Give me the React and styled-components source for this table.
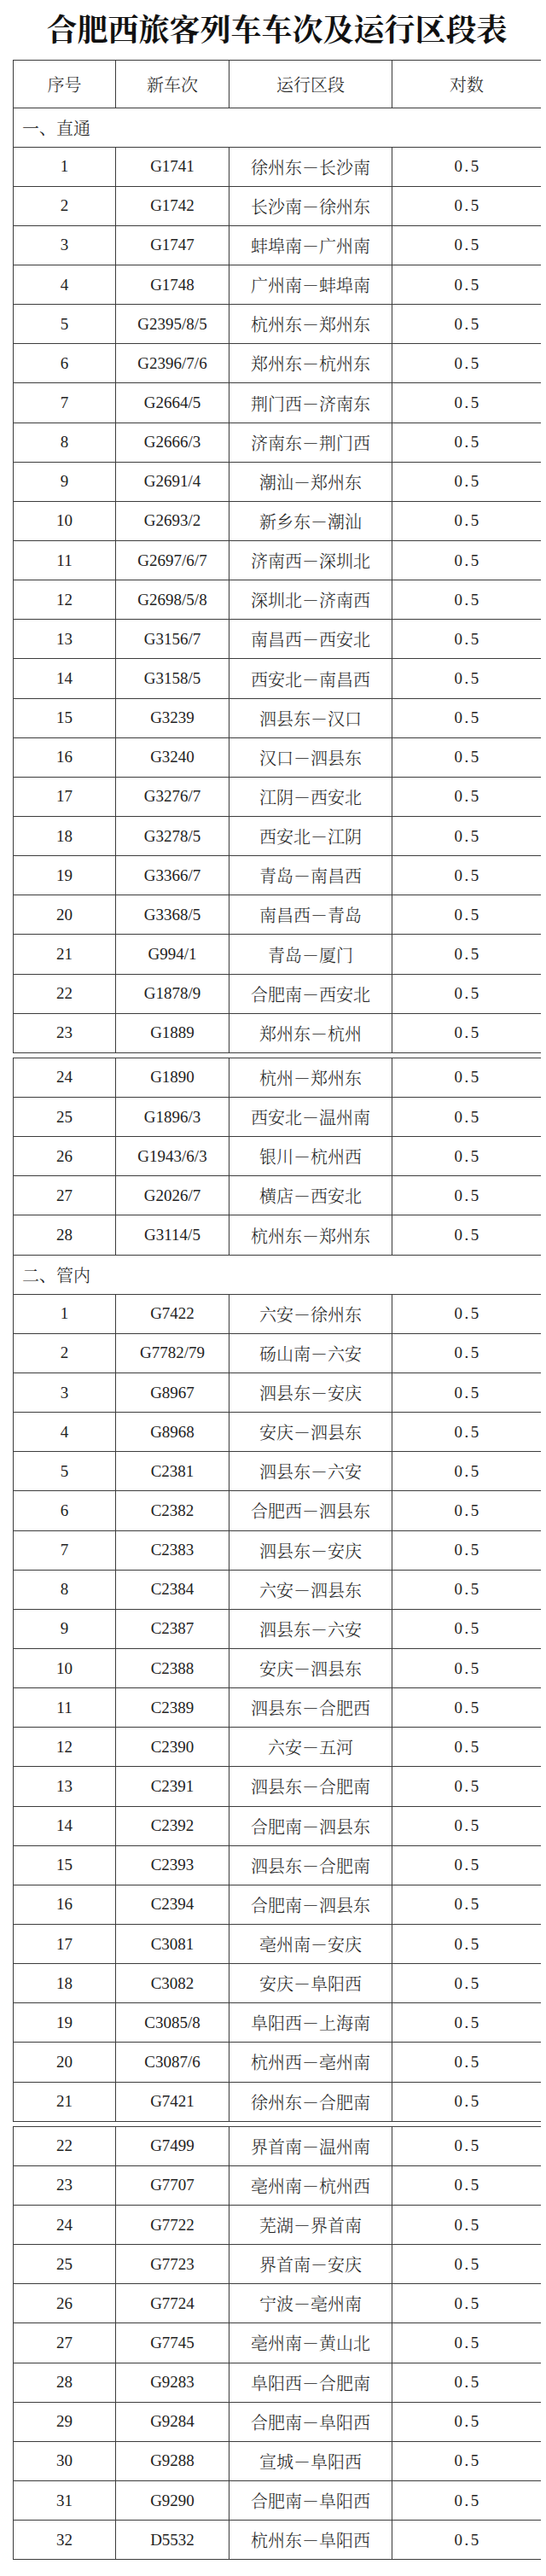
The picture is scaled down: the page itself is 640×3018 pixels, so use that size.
import React from "react";
import styled, { createGlobalStyle, css } from "styled-components";

const LINE = "#3c3c3c";
const LATIN = `"Liberation Serif", "Times New Roman", serif`;
const CJK = `"Noto Serif CJK SC", "Noto Sans CJK SC", sans-serif`;
const ROW_H = 46.15;

const GlobalStyle = createGlobalStyle`
  html, body { margin: 0; padding: 0; background: #ffffff; }
  body { font-family: ${LATIN}; color: #222222; }
`;

const Page = styled.main`
  width: 619px;
  margin-left: 15px;
  padding-bottom: 18px;
`;

const Title = styled.h1`
  margin: 0;
  height: 70px;
  box-sizing: border-box;
  padding-bottom: 4px;
  line-height: 66px;
  text-align: center;
  white-space: nowrap;
  font-family: ${CJK};
  font-weight: 700;
  font-size: 36px;
  color: #111111;
`;

const Sheet = styled.section`
  border-top: 1px solid ${LINE};
  border-left: 1px solid ${LINE};
  & + & {
    margin-top: 5px;
  }
`;

const Row = styled.div`
  display: grid;
  grid-template-columns: 120px 133px 191px 1fr;
  box-sizing: border-box;
  height: ${(p) => p.$h}px;
  border-bottom: 1px solid ${LINE};
`;

const SectionRow = styled.div`
  display: flex;
  align-items: center;
  box-sizing: border-box;
  height: ${(p) => p.$h}px;
  padding-left: 10px;
  border-bottom: 1px solid ${LINE};
  font-family: ${CJK};
  font-weight: 300;
  font-size: 20px;
  color: #222222;
`;

const kinds = {
  latin: css`
    font-family: ${LATIN};
    font-size: 19px;
  `,
  count: css`
    font-family: ${LATIN};
    font-size: 19px;
    letter-spacing: 2.5px;
    padding-left: 2px;
  `,
  cjk: css`
    font-family: ${CJK};
    font-weight: 300;
    font-size: 20px;
  `,
};

const Cell = styled.div`
  display: flex;
  align-items: center;
  justify-content: center;
  box-sizing: border-box;
  min-width: 0;
  white-space: nowrap;
  color: #222222;
  border-right: 1px solid ${LINE};
  &:last-child {
    border-right: none;
  }
  ${(p) => kinds[p.$kind]}
`;

const parse = (s) =>
  s
    .trim()
    .split("\n")
    .map((l) => l.trim().split("|"));

const block1 = parse(`
1|G1741|徐州东－长沙南
2|G1742|长沙南－徐州东
3|G1747|蚌埠南－广州南
4|G1748|广州南－蚌埠南
5|G2395/8/5|杭州东－郑州东
6|G2396/7/6|郑州东－杭州东
7|G2664/5|荆门西－济南东
8|G2666/3|济南东－荆门西
9|G2691/4|潮汕－郑州东
10|G2693/2|新乡东－潮汕
11|G2697/6/7|济南西－深圳北
12|G2698/5/8|深圳北－济南西
13|G3156/7|南昌西－西安北
14|G3158/5|西安北－南昌西
15|G3239|泗县东－汉口
16|G3240|汉口－泗县东
17|G3276/7|江阴－西安北
18|G3278/5|西安北－江阴
19|G3366/7|青岛－南昌西
20|G3368/5|南昌西－青岛
21|G994/1|青岛－厦门
22|G1878/9|合肥南－西安北
23|G1889|郑州东－杭州
`);

const block2a = parse(`
24|G1890|杭州－郑州东
25|G1896/3|西安北－温州南
26|G1943/6/3|银川－杭州西
27|G2026/7|横店－西安北
28|G3114/5|杭州东－郑州东
`);

const block2b = parse(`
1|G7422|六安－徐州东
2|G7782/79|砀山南－六安
3|G8967|泗县东－安庆
4|G8968|安庆－泗县东
5|C2381|泗县东－六安
6|C2382|合肥西－泗县东
7|C2383|泗县东－安庆
8|C2384|六安－泗县东
9|C2387|泗县东－六安
10|C2388|安庆－泗县东
11|C2389|泗县东－合肥西
12|C2390|六安－五河
13|C2391|泗县东－合肥南
14|C2392|合肥南－泗县东
15|C2393|泗县东－合肥南
16|C2394|合肥南－泗县东
17|C3081|亳州南－安庆
18|C3082|安庆－阜阳西
19|C3085/8|阜阳西－上海南
20|C3087/6|杭州西－亳州南
21|G7421|徐州东－合肥南
`);

const block3 = parse(`
22|G7499|界首南－温州南
23|G7707|亳州南－杭州西
24|G7722|芜湖－界首南
25|G7723|界首南－安庆
26|G7724|宁波－亳州南
27|G7745|亳州南－黄山北
28|G9283|阜阳西－合肥南
29|G9284|合肥南－阜阳西
30|G9288|宣城－阜阳西
31|G9290|合肥南－阜阳西
32|D5532|杭州东－阜阳西
`);

function TrainRow({ row }) {
  const [no, code, route] = row;
  return (
    <Row $h={ROW_H}>
      <Cell $kind="latin">{no}</Cell>
      <Cell $kind="latin">{code}</Cell>
      <Cell $kind="cjk">{route}</Cell>
      <Cell $kind="count">0.5</Cell>
    </Row>
  );
}

export default function App() {
  return (
    <>
      <GlobalStyle />
      <Page>
        <Title>合肥西旅客列车车次及运行区段表</Title>
        <Sheet>
          <Row $h={55.5}>
            <Cell $kind="cjk">序号</Cell>
            <Cell $kind="cjk">新车次</Cell>
            <Cell $kind="cjk">运行区段</Cell>
            <Cell $kind="cjk">对数</Cell>
          </Row>
          <SectionRow $h={ROW_H}>一、直通</SectionRow>
          {block1.map((r) => (
            <TrainRow key={r[1]} row={r} />
          ))}
        </Sheet>
        <Sheet>
          {block2a.map((r) => (
            <TrainRow key={r[1]} row={r} />
          ))}
          <SectionRow $h={ROW_H}>二、管内</SectionRow>
          {block2b.map((r) => (
            <TrainRow key={r[1]} row={r} />
          ))}
        </Sheet>
        <Sheet>
          {block3.map((r) => (
            <TrainRow key={r[1]} row={r} />
          ))}
        </Sheet>
      </Page>
    </>
  );
}
